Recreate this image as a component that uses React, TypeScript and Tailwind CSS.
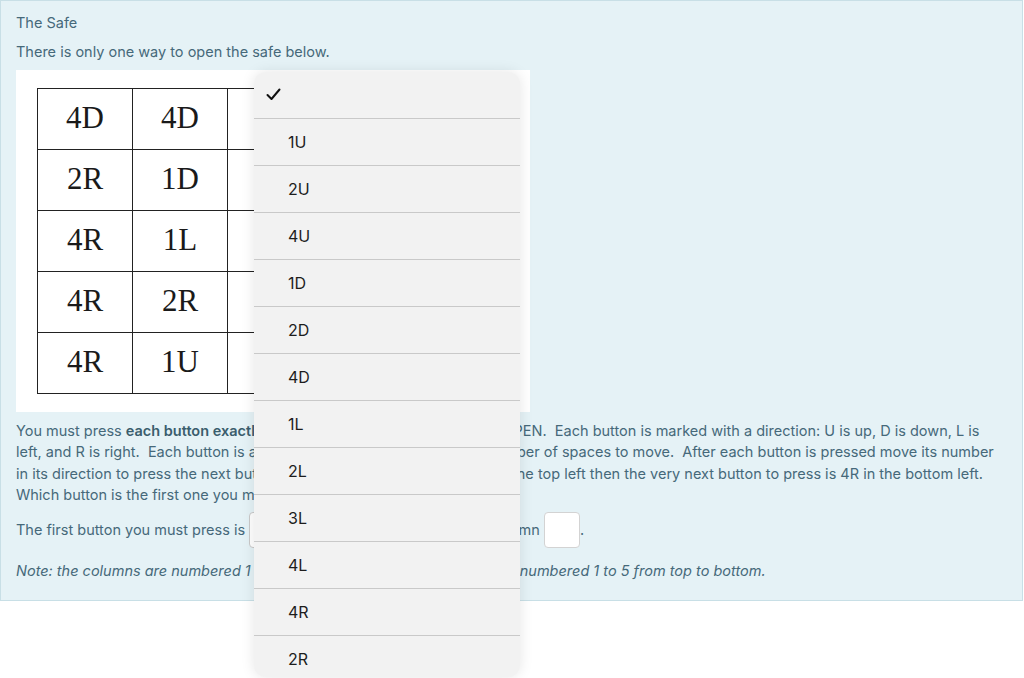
import React from "react";

const GRID = [
  ["4D", "4D", "1D", "3L", "2D"],
  ["2R", "1D", "1L", "1U", "2L"],
  ["4R", "1L", "2U", "OPEN", "4L"],
  ["4R", "2R", "1R", "2U", "4U"],
  ["4R", "1U", "3R", "1U", "2L"],
];

const OPTIONS = ["1U", "2U", "4U", "1D", "2D", "4D", "1L", "2L", "3L", "4L", "4R", "2R"];

function Picker() {
  return (
    <div className="absolute left-[254px] top-[72px] h-[605px] w-[266px] overflow-hidden rounded-[12px] bg-[#f2f2f2] shadow-[0_0_14px_rgba(0,0,0,0.10)] font-['Inter',sans-serif] text-[16px] text-[#1d1d1d]">
      <div className="flex h-[46px] items-center pl-[12px]">
        <svg width="15" height="13" viewBox="0 0 15 13" className="mt-[-2px]">
          <path d="M1.5 7 L5.5 11 L13.5 1.5" fill="none" stroke="#111" strokeWidth="2" strokeLinecap="round" strokeLinejoin="round" />
        </svg>
      </div>
      {OPTIONS.map((o) => (
        <div key={o} className="flex h-[47px] shrink-0 items-center border-t border-[#c9c9c9] pl-[34px]">
          {o}
        </div>
      ))}
    </div>
  );
}

export default function App() {
  return (
    <div className="relative h-[678px] w-[1024px] overflow-hidden bg-white font-['Inter',sans-serif] text-[14.5px] text-[#46697a]">
      <div className="h-[601px] w-[1023px] border border-[#c8dfe6] bg-[#e5f2f6] px-[15px] pt-[12px]">
        <div className="leading-[20px]">The Safe</div>
        <div className="mt-[9px] leading-[20px]">There is only one way to open the safe below.</div>

        {/* safe picture */}
        <div className="mt-[8px] h-[342px] w-[514px] bg-white pl-[21px] pt-[18px]">
          <table className="border-collapse font-['Liberation_Serif',serif] text-[31px] text-[#1a1a1a]">
            <tbody>
              {GRID.map((row, r) => (
                <tr key={r}>
                  {row.map((c, i) => (
                    <td key={i} className="h-[61px] w-[95px] border-[1.5px] border-[#222] p-0 pb-[4px] text-center leading-none">
                      {c}
                    </td>
                  ))}
                </tr>
              ))}
            </tbody>
          </table>
        </div>

        <p className="mt-[8px] whitespace-nowrap leading-[21.3px]">
          You must press <b className="font-semibold text-[#3a5d6d]">each button exactly once</b> in the correct order to reach OPEN.&nbsp; Each button is marked with a direction: U is up, D is down, L is
          <br />
          left, and R is right.&nbsp; Each button is also marked with a number for the number of spaces to move.&nbsp; After each button is pressed move its number
          <br />
          in its direction to press the next button.&nbsp; For example, if you hit the 4D in the top left then the very next button to press is 4R in the bottom left.
          <br />
          Which button is the first one you must press?
        </p>

        <div className="mt-[7px] flex h-[36px] items-center">
          <span>The first button you must press is</span>
          <span className="ml-[4px] h-[36px] w-[60px] rounded-[4px] border border-[#c9c9c9] bg-white" />
          <span className="ml-[105px]">in row and column</span>
          <span className="ml-[4px] h-[36px] w-[36px] rounded-[4px] border border-[#d3d3d3] bg-white" />
          <span>.</span>
        </div>

        <p className="mt-[13px] whitespace-nowrap italic leading-[20px]">
          Note: the columns are numbered 1 to 5 from left to right and the rows are numbered 1 to 5 from top to bottom.
        </p>
      </div>

      <Picker />
    </div>
  );
}
